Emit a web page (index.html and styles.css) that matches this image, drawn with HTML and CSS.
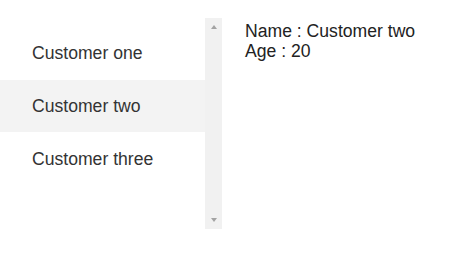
FILE: index.html
```html
<!DOCTYPE html>
<html>
<head>
<meta charset="utf-8">
<link rel="stylesheet" href="styles.css">
</head>
<body>
<div class="page">
  <div class="panel">
    <ul class="list">
      <li class="item">Customer one</li>
      <li class="item selected">Customer two</li>
      <li class="item">Customer three</li>
    </ul>
    <div class="scrollbar">
      <span class="arrow up"></span>
      <span class="arrow down"></span>
    </div>
  </div>
  <div class="detail">
    <div>Name : Customer two</div>
    <div>Age : 20</div>
  </div>
</div>
</body>
</html>
```

FILE: styles.css
```css
html, body {
  margin: 0;
  padding: 0;
  background: #ffffff;
}
body {
  font-family: "Liberation Sans", Arial, sans-serif;
  font-size: 17.6px;
}
.page {
  display: flex;
  align-items: flex-start;
  padding-top: 18px;
  gap: 23px;
}
.panel {
  display: flex;
  height: 211px;
  width: 222px;
}
.list {
  list-style: none;
  margin: 0;
  padding: 8.8px 0 0 0;
  width: 205px;
}
.item {
  height: 52.8px;
  display: flex;
  align-items: center;
  padding-left: 32px;
  color: #333333;
  line-height: 20px;
}
.item.selected {
  background: #f3f3f3;
}
.scrollbar {
  width: 17px;
  background: #f1f1f1;
  display: flex;
  flex-direction: column;
  justify-content: space-between;
  align-items: center;
  padding: 7px 0 7px 0;
  box-sizing: border-box;
}
.arrow {
  width: 0;
  height: 0;
  border-left: 3.5px solid transparent;
  border-right: 3.5px solid transparent;
}
.arrow.up {
  border-bottom: 4px solid #a3a3a3;
}
.arrow.down {
  border-top: 4px solid #a3a3a3;
}
.detail {
  padding-top: 3px;
  color: #222222;
  line-height: 20.2px;
}
```
